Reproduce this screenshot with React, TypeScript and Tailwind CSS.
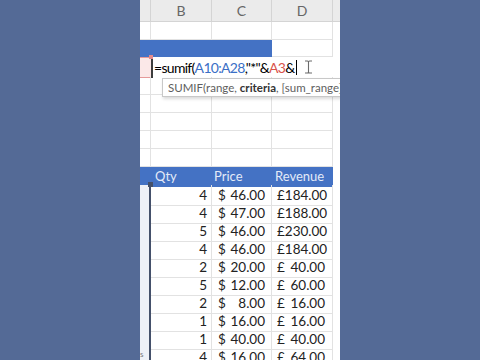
const rows: [number, string, string][] = [
  [4, "46.00", "184.00"],
  [4, "47.00", "188.00"],
  [5, "46.00", "230.00"],
  [4, "46.00", "184.00"],
  [2, "20.00", "40.00"],
  [5, "12.00", "60.00"],
  [2, "8.00", "16.00"],
  [1, "16.00", "16.00"],
  [1, "40.00", "40.00"],
  [4, "16.00", "64.00"],
];

const grid = "grid grid-cols-[11px_61px_60px_61px_7px]";
const line = "border-r border-b border-[#e2e2e2]";

function EmptyRow({ h = "h-[18px]" }: { h?: string }) {
  return (
    <div className={`${grid} ${h}`}>
      <div className={line} />
      <div className={line} />
      <div className={line} />
      <div className={line} />
      <div />
    </div>
  );
}

function IBeam() {
  return (
    <svg width="9" height="14" viewBox="0 0 9 14" className="absolute left-[164px] top-[60px]">
      <path d="M1 1h2.5c.6 0 1 .4 1 1v10c0 .6.4 1 1 1H8M8 1H5.5c-.6 0-1 .4-1 1M1 13h2.5c.6 0 1-.4 1-1" fill="none" stroke="#6b6b6b" strokeWidth="1.1" />
    </svg>
  );
}

export default function App() {
  return (
    <div className="w-[480px] h-[360px] bg-[#546a96] flex justify-center overflow-hidden">
      <div className="relative w-[200px] h-full bg-white overflow-hidden font-['Lato',sans-serif]">
        {/* column headers */}
        <div className={`${grid} h-[22px] bg-[#ebebeb] text-[14px] text-[#666]`}>
          <div className="border-r border-b border-[#d4d4d4]" />
          <div className="flex items-center justify-center border-r border-b border-[#d4d4d4]">B</div>
          <div className="flex items-center justify-center border-r border-b border-[#d4d4d4]">C</div>
          <div className="flex items-center justify-center border-r border-b border-[#d4d4d4]">D</div>
          <div className="border-b border-[#d4d4d4]" />
        </div>
        <EmptyRow />
        {/* blue title bar */}
        <div className={`${grid} h-[17px]`}>
          <div className="col-span-3 bg-[#4472c4]" />
          <div className={line} />
          <div />
        </div>
        {/* formula row */}
        <div className={`${grid} h-[20px]`}>
          <div className="bg-[#fbe8e8] border-y border-[#e59a9a]" />
          <div className="col-span-4 flex items-center pl-[1px] text-[14px] tracking-[-0.7px] text-black whitespace-nowrap border-l-2 border-[#3d3d3d]">
            <span>=sumif(</span>
            <span className="text-[#3b6fc6]">A10:A28</span>
            <span>,"*"&amp;</span>
            <span className="text-[#d9534a]">A3</span>
            <span>&amp;</span>
            <span className="ml-[2px] w-px h-[15px] bg-black" />
          </div>
        </div>
        <EmptyRow />
        <EmptyRow />
        <EmptyRow />
        <EmptyRow />
        <EmptyRow />
        {/* table header */}
        <div className={`${grid} h-[18px] text-[13px] text-[#e3eaf8]`}>
          <div className="bg-[#4472c4]" />
          <div className="bg-[#4472c4] flex items-center pl-[4px]">Qty</div>
          <div className="bg-[#4472c4] flex items-center pl-[2px]">Price</div>
          <div className="bg-[#4472c4] flex items-center pl-[3px]">Revenue</div>
          <div />
        </div>
        {rows.map(([q, p, r], i) => (
          <div key={i} className={`${grid} h-[18px] text-[13.5px] text-[#222]`}>
            <div className="bg-[#eef1f7] border-b border-[#dfe3ea] border-r-2 border-r-[#44506a]" />
            <div className={`${line} flex items-center justify-end pr-[4px]`}>{q}</div>
            <div className={`${line} flex items-center justify-between pl-[6px] pr-[6px]`}>
              <span>$</span>
              <span>{p}</span>
            </div>
            <div className={`${line} flex items-center justify-between pl-[5px] pr-[7px]`}>
              <span>£</span>
              <span>{r}</span>
            </div>
            <div />
          </div>
        ))}
        <IBeam />
        {/* range handles */}
        <div className="absolute left-[8px] top-[182px] w-[5px] h-[5px] bg-[#44506a]" />
        <div className="absolute left-[9px] top-[55px] w-[4px] h-[4px] bg-[#e58b8b]" />
        <div className="absolute left-0 top-[348px] text-[8px] text-[#777]">s</div>
        {/* tooltip */}
        <div className="absolute left-[22px] top-[78px] h-[19px] w-[190px] bg-white border border-[#c8c8c8] shadow-[1px_2px_3px_rgba(0,0,0,0.15)] flex items-center pl-[5px] text-[11.5px] text-[#5e5e5e] whitespace-nowrap">
          SUMIF(range,&nbsp;<b className="text-[#333]">criteria</b>, [sum_range])
        </div>
      </div>
    </div>
  );
}
